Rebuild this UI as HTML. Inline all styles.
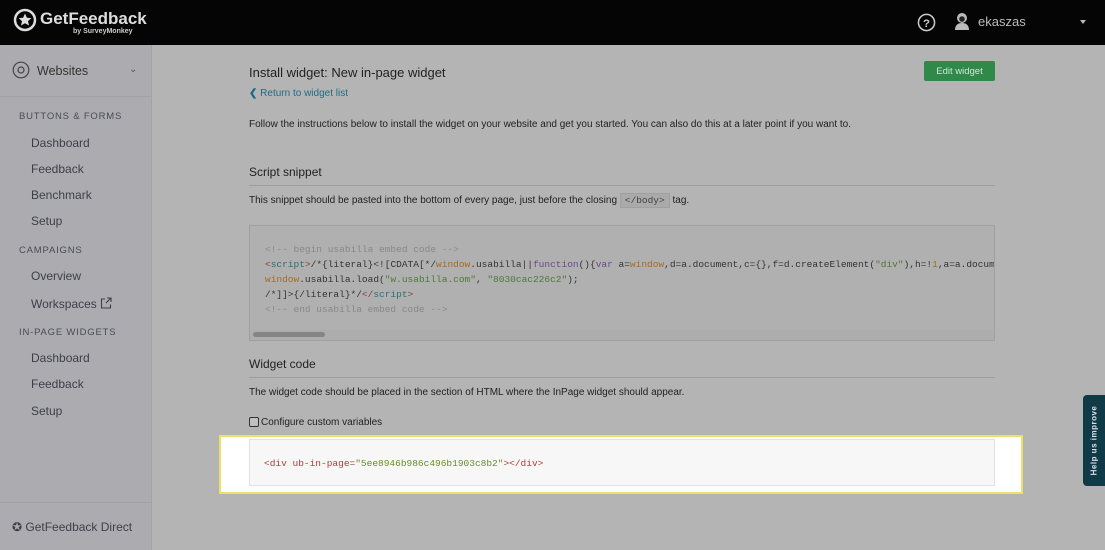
<!DOCTYPE html>
<html><head><meta charset="utf-8"><style>
*{box-sizing:border-box;margin:0;padding:0}
body{width:1105px;height:550px;overflow:hidden;background:#b4b4b4;font-family:"Liberation Sans",sans-serif;position:relative;color:#222}
.top{position:absolute;left:0;top:0;width:1105px;height:45px;background:#050505}
.side{position:absolute;left:0;top:45px;width:152px;height:505px;background:#acacb0;border-right:1px solid #a2a2a2}
.abs{position:absolute;white-space:nowrap}
.sh{font-size:9.5px;letter-spacing:.8px;color:#4a4a55}
.si{font-size:12px;color:#3e3e48}
.mono{font-family:"Liberation Mono",monospace;font-size:9.5px}
.line{position:absolute;left:249px;width:746px;height:1px;background:#9e9e9e}
</style></head><body>
<div class="top"></div>
<svg class="abs" style="left:13px;top:8px" width="24" height="24" viewBox="0 0 24 24"><circle cx="12" cy="12" r="10" fill="none" stroke="#ddd" stroke-width="2.5"/><path d="M12 5.5l1.9 4.2 4.5.4-3.4 3 1 4.4L12 15.2 8 17.5l1-4.4-3.4-3 4.5-.4z" fill="#ddd"/></svg>
<div class="abs" style="left:40px;top:9px;font-size:17px;font-weight:bold;color:#ddd">GetFeedback</div>
<div class="abs" style="left:73px;top:28px;font-size:7px;font-weight:bold;color:#ccc">by SurveyMonkey</div>
<svg class="abs" style="left:917px;top:13px" width="19" height="19" viewBox="0 0 20 20"><circle cx="10" cy="10" r="8.5" fill="none" stroke="#ccc" stroke-width="1.6"/><text x="10" y="14.5" text-anchor="middle" font-size="12" font-weight="bold" fill="#ccc" font-family="Liberation Sans">?</text></svg>
<svg class="abs" style="left:954px;top:11px" width="16" height="20" viewBox="0 0 16 20"><circle cx="8" cy="7" r="5" fill="#bbb"/><path d="M1 19c0-5 3-7 7-7s7 2 7 7z" fill="#bbb"/><circle cx="8" cy="8" r="2.8" fill="#222"/></svg>
<div class="abs" style="left:978px;top:14px;font-size:13px;color:#bbb">ekaszas</div>
<div class="abs" style="left:1080px;top:20px;border:3px solid transparent;border-top:4px solid #bbb"></div>

<div class="side"></div>
<div class="abs" style="left:0;top:45px;width:152px;height:52px;border-bottom:1px solid #a2a2a6"></div>
<svg class="abs" style="left:12px;top:61px" width="18" height="18" viewBox="0 0 18 18"><circle cx="9" cy="9" r="7.8" fill="none" stroke="#444" stroke-width="1.2"/><circle cx="9" cy="9" r="3" fill="none" stroke="#444" stroke-width="1.2"/></svg>
<div class="abs si" style="left:37px;top:64px;font-size:12.5px;color:#333">Websites</div>
<div class="abs" style="left:129px;top:64px;font-size:10px;color:#555">&#8964;</div>
<div class="abs sh" style="left:19px;top:111px">BUTTONS &amp; FORMS</div>
<div class="abs si" style="left:31px;top:136px">Dashboard</div>
<div class="abs si" style="left:31px;top:162px">Feedback</div>
<div class="abs si" style="left:31px;top:188px">Benchmark</div>
<div class="abs si" style="left:31px;top:214px">Setup</div>
<div class="abs sh" style="left:19px;top:245px">CAMPAIGNS</div>
<div class="abs si" style="left:31px;top:269px">Overview</div>
<div class="abs si" style="left:31px;top:297px">Workspaces <svg width="12" height="12" viewBox="0 0 12 12" style="vertical-align:-1px"><path d="M5 2H1.5v9h9V7.5M7 1h4v4M11 1L6 6" fill="none" stroke="#3e3e48" stroke-width="1.1"/></svg></div>
<div class="abs sh" style="left:19px;top:327px">IN-PAGE WIDGETS</div>
<div class="abs si" style="left:31px;top:351px">Dashboard</div>
<div class="abs si" style="left:31px;top:377px">Feedback</div>
<div class="abs si" style="left:31px;top:404px">Setup</div>
<div class="abs" style="left:0;top:502px;width:152px;height:1px;background:#a2a2a6"></div>
<div class="abs si" style="left:12px;top:520px">&#10026; GetFeedback Direct</div>

<div class="abs" style="left:249px;top:65px;font-size:13px;color:#222">Install widget: New in-page widget</div>
<div class="abs" style="left:924px;top:61px;width:71px;height:20px;background:#2f8a4a;border-radius:2px;color:#cfe5d5;font-size:9.5px;text-align:center;line-height:21px">Edit widget</div>
<div class="abs" style="left:249px;top:88px;font-size:10px;color:#1f6b86"><b>&#10094;</b> Return to widget list</div>
<div class="abs" style="left:249px;top:119px;font-size:10px;color:#222">Follow the instructions below to install the widget on your website and get you started. You can also do this at a later point if you want to.</div>
<div class="abs" style="left:249px;top:165px;font-size:12px;color:#222">Script snippet</div>
<div class="line" style="top:185px"></div>
<div class="abs" style="left:249px;top:195px;font-size:10px;color:#222">This snippet should be pasted into the bottom of every page, just before the closing <span class="mono" style="background:#aaaaaa;border:1px solid #a0a0a0;padding:1px 4px;color:#444">&lt;/body&gt;</span> tag.</div>
<div class="abs" style="left:249px;top:225px;width:746px;height:116px;background:#b0b0b0;border:1px solid #a0a0a0;overflow:hidden">
<div class="mono" style="position:absolute;left:15px;top:16px;line-height:15px;color:#333;white-space:pre"><span style="color:#888">&lt;!-- begin usabilla embed code --&gt;</span>
<span style="color:#8a3a3a">&lt;</span><span style="color:#2d6e73">script</span><span style="color:#8a3a3a">&gt;</span>/*{literal}&lt;![CDATA[*/<span style="color:#a86a20">window</span>.usabilla||<span style="color:#6a4a8a">function</span>(){<span style="color:#6a4a8a">var</span> a=<span style="color:#a86a20">window</span>,d=a.document,c={},f=d.createElement(<span style="color:#4a7a3a">"div"</span>),h=!<span style="color:#a86a20">1</span>,a=a.document,c={}
<span style="color:#a86a20">window</span>.usabilla.load(<span style="color:#4a7a3a">"w.usabilla.com"</span>, <span style="color:#4a7a3a">"8030cac226c2"</span>);
/*]]&gt;{/literal}*/<span style="color:#8a3a3a">&lt;/</span><span style="color:#2d6e73">script</span><span style="color:#8a3a3a">&gt;</span>
<span style="color:#888">&lt;!-- end usabilla embed code --&gt;</span></div>
<div style="position:absolute;left:0;bottom:0;width:100%;height:10px;background:#adadad"></div>
<div style="position:absolute;left:3px;bottom:3px;width:72px;height:5px;border-radius:3px;background:#858585"></div>
</div>
<div class="abs" style="left:249px;top:357px;font-size:12px;color:#222">Widget code</div>
<div class="line" style="top:377px"></div>
<div class="abs" style="left:249px;top:387px;font-size:10px;color:#222">The widget code should be placed in the section of HTML where the InPage widget should appear.</div>
<div class="abs" style="left:249px;top:417px;width:10px;height:10px;border:1px solid #333;border-radius:2px;background:#c0c0c0"></div>
<div class="abs" style="left:261px;top:417px;font-size:10px;color:#222">Configure custom variables</div>
<div class="abs" style="left:219px;top:435px;width:804px;height:59px;background:#fff;border:2px solid #ecdf6a"></div>
<div class="abs" style="left:249px;top:439px;width:746px;height:47px;background:#f7f7f7;border:1px solid #e2e2e2"></div>
<div class="abs mono" style="left:264px;top:458px;color:#b03a3a">&lt;div ub-in-page=<span style="color:#6a8a2a">"5ee8946b986c496b1903c8b2"</span>&gt;&lt;/div&gt;</div>
<div class="abs" style="left:1083px;top:395px;width:22px;height:91px;background:#103a45;border-radius:4px 0 0 4px"></div>
<div class="abs" style="left:1083px;top:395px;width:22px;height:91px;display:flex;align-items:center;justify-content:center"><div style="transform:rotate(-90deg);white-space:nowrap;color:#dde;font-size:8px;font-weight:bold;letter-spacing:.5px">Help us improve</div></div>
</body></html>
